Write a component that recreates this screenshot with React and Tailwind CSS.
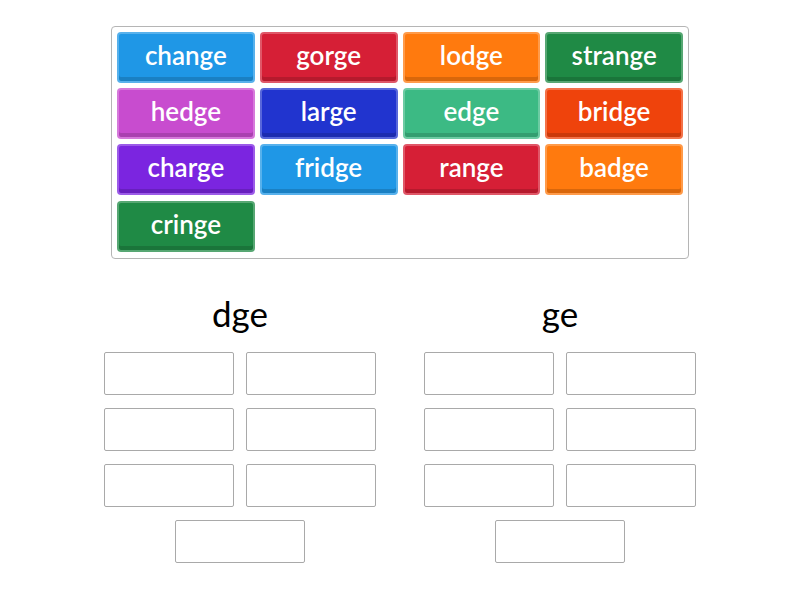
import React from "react";

const tiles = [
  { word: "change", bg: "bg-[#1f97e6]" },
  { word: "gorge", bg: "bg-[#d61f36]" },
  { word: "lodge", bg: "bg-[#ff7a0e]" },
  { word: "strange", bg: "bg-[#1f8a45]" },
  { word: "hedge", bg: "bg-[#c84ccf]" },
  { word: "large", bg: "bg-[#2134cf]" },
  { word: "edge", bg: "bg-[#3cba84]" },
  { word: "bridge", bg: "bg-[#ef430c]" },
  { word: "charge", bg: "bg-[#7b25e0]" },
  { word: "fridge", bg: "bg-[#1f97e6]" },
  { word: "range", bg: "bg-[#d61f36]" },
  { word: "badge", bg: "bg-[#ff7a0e]" },
  { word: "cringe", bg: "bg-[#1f8a45]" },
];

function Tile({ word, bg }) {
  return (
    <div
      className={`${bg} h-[51px] rounded-[4px] border-2 border-white/25 shadow-[inset_0_-4px_0_rgba(0,0,0,0.15)] flex items-center justify-center text-white text-[26px] font-semibold pb-[4px]`}
    >
      {word}
    </div>
  );
}

function DropBox() {
  return <div className="w-[130px] h-[43px] border border-[#a9a9a9] rounded-[2px] bg-white" />;
}

function Group({ title }) {
  return (
    <div className="flex flex-col items-center w-[272px]">
      <h2 className="text-[35px] leading-[40px] text-black mb-[19px]">{title}</h2>
      <div className="grid grid-cols-2 gap-x-[12px] gap-y-[13px]">
        {[0, 1, 2, 3, 4, 5].map((i) => (
          <DropBox key={i} />
        ))}
      </div>
      <div className="mt-[13px]">
        <DropBox />
      </div>
    </div>
  );
}

export default function App() {
  return (
    <div
      className="w-[800px] h-[600px] bg-white flex flex-col items-center pt-[26px]"
      style={{ fontFamily: "Lato, 'Open Sans', sans-serif" }}
    >
      <div className="w-[578px] border border-[#b5b5b5] rounded-[4px] pt-[5px] px-[5px] pb-[6px] grid grid-cols-4 gap-x-[5px] gap-y-[5px] [&>*:nth-child(13)]:mt-[1px]">
        {tiles.map((t) => (
          <Tile key={t.word} {...t} />
        ))}
      </div>
      <div className="flex gap-[48px] mt-[34px]">
        <Group title="dge" />
        <Group title="ge" />
      </div>
    </div>
  );
}
